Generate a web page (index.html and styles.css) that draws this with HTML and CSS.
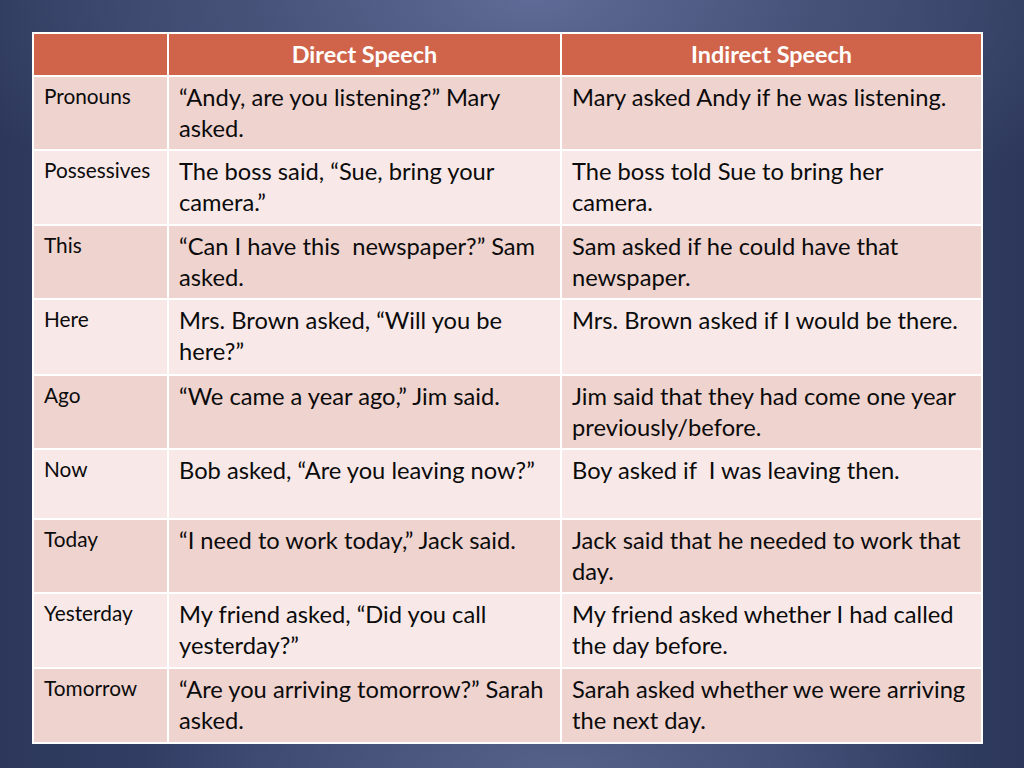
FILE: index.html
```html
<!DOCTYPE html>
<html lang="en">
<head>
<meta charset="utf-8">
<title>Direct and Indirect Speech</title>
<link rel="stylesheet" href="styles.css">
</head>
<body>
<div class="slide">
  <div class="grid">
    <div class="cell head"></div>
    <div class="cell head">Direct Speech</div>
    <div class="cell head">Indirect Speech</div>

    <div class="cell label dark">Pronouns</div>
    <div class="cell dark">“Andy, are you listening?” Mary asked.</div>
    <div class="cell dark">Mary asked Andy if he was listening.</div>

    <div class="cell label light">Possessives</div>
    <div class="cell light">The boss said, “Sue, bring your camera.”</div>
    <div class="cell light">The boss told Sue to bring her<br>camera.</div>

    <div class="cell label dark">This</div>
    <div class="cell dark">“Can I have this&nbsp; newspaper?” Sam asked.</div>
    <div class="cell dark">Sam asked if he could have that newspaper.</div>

    <div class="cell label light">Here</div>
    <div class="cell light">Mrs. Brown asked, “Will you be here?”</div>
    <div class="cell light">Mrs. Brown asked if I would be there.</div>

    <div class="cell label dark">Ago</div>
    <div class="cell dark">“We came a year ago,” Jim said.</div>
    <div class="cell dark">Jim said that they had come one year previously/before.</div>

    <div class="cell label light">Now</div>
    <div class="cell light">Bob asked, “Are you leaving now?”</div>
    <div class="cell light">Boy asked if&nbsp; I was leaving then.</div>

    <div class="cell label dark">Today</div>
    <div class="cell dark">“I need to work today,” Jack said.</div>
    <div class="cell dark">Jack said that he needed to work that day.</div>

    <div class="cell label light">Yesterday</div>
    <div class="cell light">My friend asked, “Did you call yesterday?”</div>
    <div class="cell light">My friend asked whether I had called the day before.</div>

    <div class="cell label dark">Tomorrow</div>
    <div class="cell dark">“Are you arriving tomorrow?” Sarah<br>asked.</div>
    <div class="cell dark">Sarah asked whether we were arriving the next day.</div>
  </div>
</div>
</body>
</html>
```

FILE: styles.css
```css
html, body {
  margin: 0;
  padding: 0;
}
body {
  width: 1024px;
  height: 768px;
  overflow: hidden;
  font-family: "Lato", "Open Sans", "Liberation Sans", sans-serif;
}
.slide {
  width: 1024px;
  height: 768px;
  box-sizing: border-box;
  padding: 32px 0 0 32px;
  background:
    radial-gradient(ellipse 420px 140px at 55% 100%, rgba(95,106,145,0.75), rgba(95,106,145,0) 100%),
    radial-gradient(ellipse 620px 260px at 52% 0%, #5f6b96 0%, rgba(74,85,124,0.85) 45%, rgba(52,63,100,0) 100%),
    linear-gradient(90deg, #2c375b 0%, #36426a 25%, #3c4871 50%, #36426a 75%, #2c375b 100%);
}
.grid {
  display: grid;
  width: 951px;
  box-sizing: border-box;
  padding: 2px;
  gap: 2px;
  background: #ffffff;
  grid-template-columns: 133px 391px 419px;
  grid-template-rows: 41px 72px 73px 72px 74px 72px 68px 72px 73px 73px;
}
.cell {
  box-sizing: border-box;
  padding: 5px 6px 0 10px;
  font-size: 23.7px;
  line-height: 31px;
  color: #0b0b0b;
}
.head {
  background: #d0644a;
  color: #ffffff;
  font-weight: bold;
  font-size: 23.4px;
  text-align: center;
  padding: 0;
  display: flex;
  align-items: center;
  justify-content: center;
}
.label {
  font-size: 20.8px;
  line-height: 30px;
  padding-top: 4px;
  padding-left: 10px;
}
.dark {
  background: #efd3cf;
}
.light {
  background: #f8e9e8;
}
```
